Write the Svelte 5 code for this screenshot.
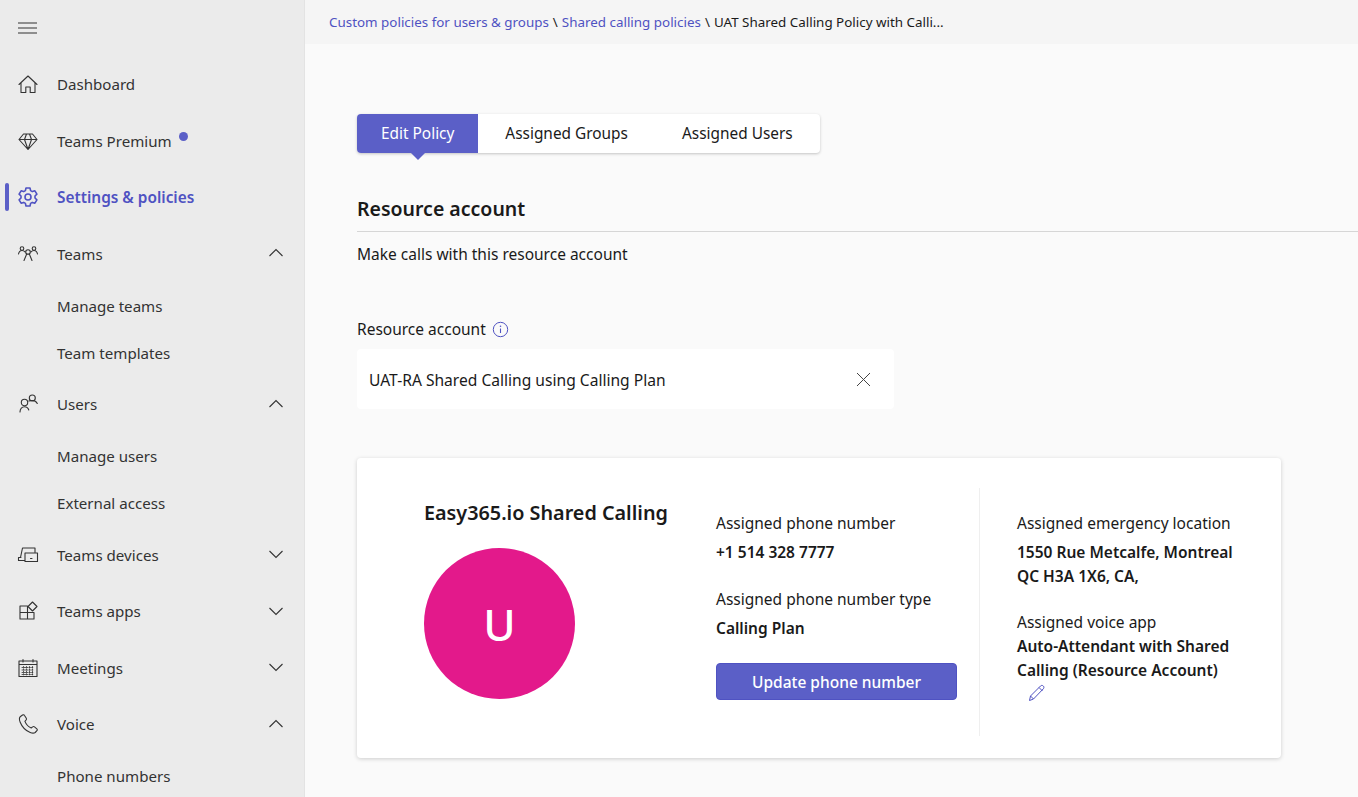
<script>
  // Left navigation, top level items and their open sub items
  const nav = [
    { label: 'Dashboard', icon: 'home' },
    { label: 'Teams Premium', icon: 'diamond', dot: true },
    { label: 'Settings & policies', icon: 'gear', active: true },
    { label: 'Teams', icon: 'teams', open: true, subs: ['Manage teams', 'Team templates'] },
    { label: 'Users', icon: 'users', open: true, subs: ['Manage users', 'External access'] },
    { label: 'Teams devices', icon: 'devices', open: false },
    { label: 'Teams apps', icon: 'apps', open: false },
    { label: 'Meetings', icon: 'calendar', open: false },
    { label: 'Voice', icon: 'phone', open: true, subs: ['Phone numbers'] }
  ];

  const tabs = ['Edit Policy', 'Assigned Groups', 'Assigned Users'];
  let activeTab = 'Edit Policy';
</script>

<div class="page">
  <aside class="sidebar">
    <div class="burger" aria-label="Menu">
      <svg width="20" height="12" viewBox="0 0 20 12"><path d="M0 1h19M0 6h19M0 11h19" stroke="#333" stroke-width="1.1" fill="none"/></svg>
    </div>

    <nav>
      {#each nav as item}
        <div class="item" class:active={item.active}>
          <span class="icon">
            <svg width="24" height="24" viewBox="0 0 24 24" fill="none" stroke="currentColor" stroke-width="1.1" stroke-linejoin="round" stroke-linecap="round">
              {#if item.icon === 'home'}
                <path d="M5 11v9.500h4.800v-5.500h4.400v5.500H19V11M3 12.500 12 4l9 8.500"/>
              {:else if item.icon === 'diamond'}
                <path d="M7.500 5h9l4.500 5.500L12 20.500 3 10.500zM3 10.500h18M8.500 10.500 12 20.500l3.500-10M8.500 10.500 10.500 5M15.500 10.500 13.500 5"/>
              {:else if item.icon === 'gear'}
                <g stroke-width="1.600">
                  <circle cx="12" cy="12" r="3"/>
                  <path d="M10 3h4l.6 2.600 1.700 1 2.600-.8 2 3.400-1.900 1.800v2l1.900 1.800-2 3.400-2.600-.8-1.700 1L14 21h-4l-.6-2.600-1.700-1-2.600.8-2-3.400L5 13v-2L3.100 9.200l2-3.400 2.600.8 1.700-1z"/>
                </g>
              {:else if item.icon === 'teams'}
                <circle cx="12" cy="10" r="2.300"/>
                <path d="M8 18.500l2.800-6.700M16 18.500l-2.800-6.700"/>
                <circle cx="6" cy="6.500" r="1.800"/>
                <circle cx="18" cy="6.500" r="1.800"/>
                <path d="M2.500 12c.5-2.300 1.800-3.500 3.500-3.500 1.200 0 2.200.5 3 1.400M21.500 12c-.5-2.300-1.800-3.500-3.500-3.500-1.200 0-2.200.5-3 1.400"/>
              {:else if item.icon === 'users'}
                <circle cx="16.300" cy="6" r="3"/>
                <circle cx="8.500" cy="10.500" r="3.200"/>
                <path d="M4 20c0-3 2-5.300 4.500-5.300 2 0 3.700 1.300 4.300 3.300M12.800 9c1.100-.3 2.300-.5 3.500-.5 2.200 0 4 1 5 3"/>
              {:else if item.icon === 'devices'}
                <path d="M4.500 14.500 6.500 5h12.500v4M5 14.500H2.500V17.500H9M9 10h12.500v8.500H9zM14.500 15.500h1.500"/>
              {:else if item.icon === 'apps'}
                <path d="M4 7h7.500v6.500H4zM4 13.500h7.500v6.500H4zM11.500 13.500H18V20h-6.500zM16.500 3 21 7.500 16.500 12 12 7.500z"/>
              {:else if item.icon === 'calendar'}
                <path d="M3 5h18v15.500H3zM3 8.500h18M7 3.500V6M17 3.500V6"/>
                <path d="M6 11.500h12M6 14h12M6 16.500h12M6 18.500h12M7.500 10.500v8.500M10.500 10.500v8.500M13.500 10.500v8.500M16.500 10.500v8.500" stroke-width=".8" stroke-dasharray="1.200 1.200"/>
              {:else if item.icon === 'phone'}
                <path d="M6.500 3 4.500 4.500C3.200 5.500 3.200 7.800 4.200 10.300c1.900 4.800 5.300 8.400 10 10.200 2.200.9 3.900.8 5 0l1.700-1.800c.6-.6.5-1.400-.1-1.900l-2.300-1.900c-.6-.5-1.300-.5-1.900 0l-1.400 1.100c-2.400-1-5.200-4-6.300-6.600l1.200-1.400c.5-.6.5-1.200.2-1.800L8.500 3.500C8 2.700 7.300 2.500 6.500 3z"/>
              {/if}
            </svg>
          </span>
          <span class="label">{item.label}</span>
          {#if item.dot}<span class="dot"></span>{/if}
          {#if item.open !== undefined}
            <svg class="chev" class:up={item.open} width="16" height="10" viewBox="0 0 16 10"><path d="M1.500 2 8 8.500 14.500 2" fill="none" stroke="#333" stroke-width="1.100"/></svg>
          {/if}
        </div>
        {#if item.subs}
          {#each item.subs as sub}
            <div class="sub">{sub}</div>
          {/each}
        {/if}
      {/each}
    </nav>
  </aside>

  <main>
    <div class="crumbs">
      <span class="link">Custom policies for users &amp; groups</span>
      <span class="sep">\</span>
      <span class="link">Shared calling policies</span>
      <span class="sep">\</span>
      <span>UAT Shared Calling Policy with Calli...</span>
    </div>

    <div class="body">
      <div class="tabs">
        {#each tabs as tab}
          <button class="tab" class:on={tab === activeTab} onclick={() => (activeTab = tab)}>{tab}</button>
        {/each}
      </div>

      <h2>Resource account</h2>
      <p class="desc">Make calls with this resource account</p>

      <div class="field-label">
        Resource account
        <svg width="17" height="17" viewBox="0 0 17 17" fill="none" stroke="#4f52c2"><circle cx="8.500" cy="8.500" r="7.200" stroke-width="1"/><path d="M8.500 7.500v4.500" stroke-width="1.100"/><circle cx="8.500" cy="5.200" r=".8" fill="#4f52c2" stroke="none"/></svg>
      </div>
      <div class="select">
        <span>UAT-RA Shared Calling using Calling Plan</span>
        <svg width="15" height="15" viewBox="0 0 15 15"><path d="M1 1l13 13M14 1 1 14" stroke="#444" stroke-width="1" fill="none"/></svg>
      </div>

      <section class="card">
        <div class="who">
          <h3>Easy365.io Shared Calling</h3>
          <div class="avatar">U</div>
        </div>

        <div class="numbers">
          <div class="k">Assigned phone number</div>
          <div class="v first">+1 514 328 7777</div>
          <div class="k gap">Assigned phone number type</div>
          <div class="v first">Calling Plan</div>
          <button class="update">Update phone number</button>
        </div>

        <div class="extra">
          <div class="k">Assigned emergency location</div>
          <div class="v first">1550 Rue Metcalfe, Montreal<br />QC H3A 1X6, CA,</div>
          <div class="k gap2">Assigned voice app</div>
          <div class="v">Auto-Attendant with Shared<br />Calling (Resource Account)</div>
          <svg class="pen" width="18" height="18" viewBox="0 0 18 18" fill="none" stroke="#4f52c2" stroke-width="1" stroke-linejoin="round"><path d="M1.500 16.500l1-4.500L12.500 2c.8-.8 2-.8 2.800 0s.8 2 0 2.800L5.500 15zM2.500 12l3 3M11 3.500l3.500 3.500"/></svg>
        </div>
      </section>
    </div>
  </main>
</div>

<style>
  :global(body) {
    margin: 0;
    background: #fafafa;
  }

  .page {
    display: flex;
    height: 797px;
    overflow: hidden;
    font-family: "Noto Sans", "Open Sans", sans-serif;
    font-size: 15.5px;
    color: #1a1a1a;
  }

  .sidebar {
    width: 305px;
    flex: none;
    background: #ebebeb;
    box-sizing: border-box;
    border-right: 1px solid #e3e3e3;
    font-size: 15.1px;
  }

  .burger {
    height: 56.75px;
    padding: 22px 0 0 18px;
    box-sizing: border-box;
  }

  .burger svg {
    display: block;
  }

  .item {
    position: relative;
    display: flex;
    align-items: center;
    height: 56.5px;
    padding-left: 16px;
    padding-bottom: 2px;
    box-sizing: border-box;
    color: #333;
  }

  .icon {
    width: 24px;
    height: 24px;
    margin-right: 17px;
    display: flex;
  }

  .item.active {
    color: #4f52c2;
    font-weight: 600;
    font-size: 15.4px;
  }

  .item.active::before {
    content: '';
    position: absolute;
    left: 5px;
    top: 13px;
    width: 4px;
    height: 28px;
    border-radius: 2px;
    background: #5b5fc7;
  }

  .dot {
    width: 9px;
    height: 9px;
    border-radius: 50%;
    background: #5b5fc7;
    margin: -8px 0 0 7px;
  }

  .chev {
    position: absolute;
    right: 20px;
    top: 22px;
  }

  .chev.up {
    transform: rotate(180deg);
  }

  .sub {
    height: 47px;
    line-height: 46px;
    padding-left: 57px;
    color: #333;
  }

  main {
    flex: 1;
    min-width: 0;
  }

  .crumbs {
    height: 44px;
    background: #f5f5f5;
    padding-left: 24px;
    display: flex;
    align-items: center;
    gap: 4px;
    font-size: 13.4px;
    white-space: nowrap;
  }

  .link {
    color: #4f52c2;
  }

  .body {
    padding: 70px 0 0 52px;
  }

  .tabs {
    display: inline-flex;
    height: 39px;
    vertical-align: top;
    background: #fff;
    border-radius: 4px;
    box-shadow: 0 1px 3px rgba(0, 0, 0, 0.22);
  }

  .tab {
    position: relative;
    border: none;
    background: none;
    font: inherit;
    font-size: 15.4px;
    color: #1a1a1a;
    padding: 0 27px;
    border-radius: 4px 0 0 4px;
  }

  .tab.on {
    background: #5b5fc7;
    color: #fff;
    padding: 0 24px;
  }

  .tab.on::after {
    content: '';
    position: absolute;
    left: 50%;
    bottom: -7px;
    margin-left: -7px;
    border: 7px solid transparent;
    border-top-color: #5b5fc7;
    border-bottom: none;
  }

  h2 {
    margin: 39px 0 0;
    height: 39px;
    font-size: 19.5px;
    font-weight: 600;
    line-height: 34px;
    border-bottom: 1px solid #d6d6d6;
    box-sizing: content-box;
  }

  .desc {
    margin: 0;
    height: 44px;
    line-height: 44px;
  }

  .field-label {
    display: flex;
    align-items: center;
    gap: 6px;
    margin-top: 41px;
    height: 24px;
  }

  .select {
    width: 537px;
    height: 60px;
    margin-top: 8px;
    padding: 1px 23px 0 12px;
    box-sizing: border-box;
    display: flex;
    align-items: center;
    justify-content: space-between;
    background: #fff;
    border-radius: 4px;
    font-size: 15.6px;
  }

  .card {
    display: flex;
    width: 924px;
    height: 300px;
    margin-top: 49px;
    background: #fff;
    border-radius: 4px;
    box-shadow: 0 1px 4px rgba(0, 0, 0, 0.18);
    box-sizing: border-box;
    padding: 30px 0 22px 67px;
  }

  .who {
    width: 292px;
    flex: none;
  }

  h3 {
    margin: 10px 0 0;
    font-size: 19.8px;
    font-weight: 600;
    line-height: 30px;
  }

  .avatar {
    width: 151px;
    height: 151px;
    margin-top: 20px;
    border-radius: 50%;
    background: #e3198b;
    color: #fff;
    font-size: 44px;
    font-weight: 500;
    display: flex;
    align-items: center;
    justify-content: center;
  }

  .numbers {
    width: 264px;
    flex: none;
    padding-top: 23px;
    border-right: 1px solid #efefef;
    box-sizing: border-box;
  }

  .k {
    line-height: 24px;
  }

  .v {
    font-weight: 600;
    line-height: 24px;
  }

  .v.first {
    margin-top: 5px;
  }

  .gap {
    margin-top: 23px;
  }

  .gap2 {
    margin-top: 22px;
  }

  .update {
    display: block;
    width: 241px;
    height: 37px;
    margin-top: 23px;
    border: 1px solid #4f52c2;
    border-radius: 4px;
    background: #5b5fc7;
    color: #fff;
    font: inherit;
    font-weight: 500;
  }

  .extra {
    padding: 23px 0 0 37px;
  }

  .pen {
    display: block;
    margin: 2px 0 0 11px;
  }
</style>
